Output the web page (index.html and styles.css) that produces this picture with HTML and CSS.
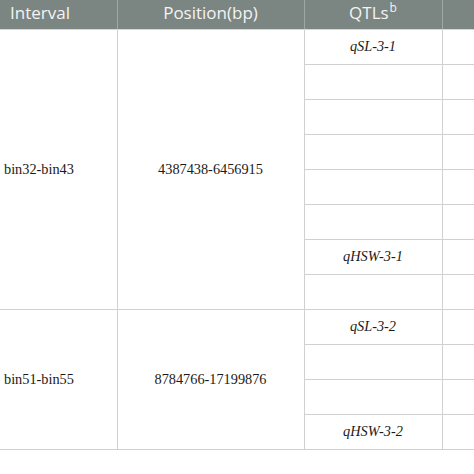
FILE: index.html
```html
<!DOCTYPE html>
<html>
<head>
<meta charset="utf-8">
<link rel="stylesheet" href="styles.css">
</head>
<body>
<table class="qtl">
  <colgroup>
    <col class="c1"><col class="c2"><col class="c3"><col class="c4">
  </colgroup>
  <thead>
    <tr>
      <th class="left">Interval</th>
      <th>Position(bp)</th>
      <th>QTLs<sup>b</sup></th>
      <th class="last"></th>
    </tr>
  </thead>
  <tbody>
    <tr><td class="left" rowspan="8">bin32-bin43</td><td rowspan="8">4387438-6456915</td><td class="q">qSL-3-1</td><td class="last"></td></tr>
    <tr><td></td><td class="last"></td></tr>
    <tr><td></td><td class="last"></td></tr>
    <tr><td></td><td class="last"></td></tr>
    <tr><td></td><td class="last"></td></tr>
    <tr><td></td><td class="last"></td></tr>
    <tr><td class="q">qHSW-3-1</td><td class="last"></td></tr>
    <tr><td></td><td class="last"></td></tr>
    <tr><td class="left" rowspan="4">bin51-bin55</td><td rowspan="4">8784766-17199876</td><td class="q">qSL-3-2</td><td class="last"></td></tr>
    <tr><td></td><td class="last"></td></tr>
    <tr><td></td><td class="last"></td></tr>
    <tr><td class="q">qHSW-3-2</td><td class="last"></td></tr>
  </tbody>
</table>
</body>
</html>
```
FILE: styles.css
```css
html, body {
  margin: 0;
  padding: 0;
  background: #ffffff;
  overflow: hidden;
}
.qtl {
  border-collapse: collapse;
  table-layout: fixed;
  width: 474px;
}
.c1 { width: 117px; }
.c2 { width: 187px; }
.c3 { width: 138px; }
.c4 { width: 32px; }
.qtl th {
  height: 29px;
  padding: 0 0 3px 0;
  box-sizing: border-box;
  background: #7b8582;
  color: #f3f4f3;
  font-family: "Open Sans", "Noto Sans", sans-serif;
  font-weight: 400;
  font-size: 17px;
  text-align: center;
  border-right: 1px solid #a0a8a6;
  border-bottom: 1px solid #d6d6d6;
}
.qtl th.left {
  text-align: left;
  padding-left: 10px;
}
.qtl th.last,
.qtl td.last {
  border-right: none;
}
.qtl sup {
  font-size: 12px;
  vertical-align: 7px;
  line-height: 0;
  margin-left: 1px;
}
.qtl td {
  height: 34px;
  padding: 0;
  border: 1px solid #d0d0d0;
  font-family: "Liberation Serif", "Times New Roman", serif;
  font-size: 14.3px;
  color: #1a1a1a;
  text-align: center;
  vertical-align: middle;
}
.qtl td.left {
  text-align: left;
  padding-left: 4px;
  border-left: none;
}
.qtl td.q {
  font-style: italic;
}
```
